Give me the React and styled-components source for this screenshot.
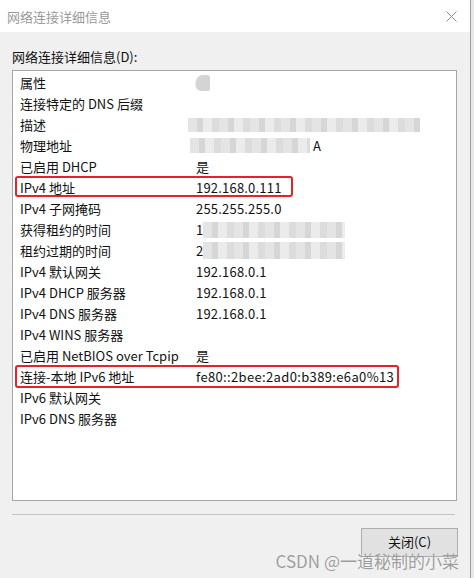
import React from "react";
import styled, { createGlobalStyle } from "styled-components";

const Global = createGlobalStyle`
  html, body { margin: 0; padding: 0; }
  body {
    width: 474px; height: 578px; overflow: hidden;
    background: #e9e9e9;
    font-family: "Noto Sans CJK SC", "Noto Sans", sans-serif;
  }
`;

const Page = styled.div`
  display: flex;
  width: 474px;
  height: 578px;
`;

const Window = styled.div`
  position: relative;
  width: 470px;
  height: 578px;
  display: flex;
  flex-direction: column;
  background: #f0f0f0;
  border-right: 1px solid #9c9c9c;
`;

const TitleBar = styled.div`
  height: 32px;
  flex: none;
  background: #ffffff;
  display: flex;
  align-items: center;
  justify-content: space-between;
  padding: 0 12px 0 7px;
`;

const Title = styled.span`
  font-size: 13px;
  color: #9a9a9a;
`;

const CloseX = styled.svg`
  width: 11px;
  height: 11px;
  margin-right: 1px;
`;

const Body = styled.div`
  flex: 1;
  display: flex;
  flex-direction: column;
  padding: 15px 13px 0 12px;
`;

const Label = styled.div`
  font-size: 13px;
  line-height: 19px;
  color: #111;
  margin-bottom: 4px;
`;

const ListBox = styled.div`
  height: 428px;
  background: #ffffff;
  border: 1px solid #a6a6a6;
  padding: 1px 0 0 7px;
  display: flex;
  flex-direction: column;
  align-items: flex-start;
`;

const Row = styled.div`
  position: relative;
  display: flex;
  height: 21px;
  align-items: center;
  font-size: 13px;
  color: #111;
  white-space: nowrap;
  ${(p) =>
    p.$marked &&
    `
    &::after {
      content: "";
      position: absolute;
      top: -1px;
      bottom: ${p.$tall ? "-1px" : "1px"};
      left: -5px;
      right: ${p.$pad}px;
      border: 2px solid #e5222a;
      border-radius: 3px;
    }
  `}
`;

const Name = styled.span`
  width: 176px;
  flex: none;
`;

const Value = styled.span`
  position: relative;
  display: flex;
  align-items: center;
  letter-spacing: ${(p) => p.$ls || 0}px;
`;

const Redact = styled.span`
  display: inline-block;
  height: ${(p) => p.$h}px;
  width: ${(p) => p.$w}px;
  margin-left: ${(p) => p.$ml || 0}px;
  background: repeating-linear-gradient(
    90deg,
    #e4e4e4 0 9px,
    #d6d6d6 9px 15px,
    #ebebeb 15px 24px,
    #dcdcdc 24px 31px
  );
`;

const Blob = styled.span`
  display: inline-block;
  width: 14px;
  height: 16px;
  border-radius: 8px 3px 2px 6px;
  background: #d4d4d4;
  margin-left: -1px;
  border-left: 1px solid #ececec;
`;

const Separator = styled.div`
  height: 1px;
  background: #c4c4c4;
  margin: 13px 2px 0 0;
`;

const Footer = styled.div`
  display: flex;
  justify-content: flex-end;
  padding-top: 13px;
  margin-right: -1px;
`;

const Button = styled.button`
  width: 97px;
  height: 29px;
  background: #e1e1e1;
  border: 1px solid #adadad;
  font-family: inherit;
  font-size: 13px;
  color: #111;
  padding: 0 0 2px;
`;

const Watermark = styled.div`
  position: absolute;
  right: 11px;
  bottom: 6px;
  font-size: 17px;
  line-height: 22px;
  color: rgba(140, 140, 140, 0.85);
  font-family: "Noto Sans CJK SC", "Liberation Sans", sans-serif;
  text-shadow: 0 0 1px rgba(255, 255, 255, 0.8);
`;

const rows = [
  { n: "属性", v: <Blob /> },
  { n: "连接特定的 DNS 后缀", v: "" },
  { n: "描述", v: <Redact $w={232} $h={14} $ml={-8} /> },
  { n: "物理地址", v: <><Redact $w={120} $h={15} $ml={-6} /><span>&nbsp;A</span></> },
  { n: "已启用 DHCP", v: "是" },
  { n: "IPv4 地址", v: "192.168.0.111", marked: true, pad: -11, ls: 0.2 },
  { n: "IPv4 子网掩码", v: "255.255.255.0", ls: 0.2 },
  { n: "获得租约的时间", v: <><span>1</span><Redact $w={142} $h={16} $ml={0} /></> },
  { n: "租约过期的时间", v: <><span>2</span><Redact $w={142} $h={17} $ml={0} /></> },
  { n: "IPv4 默认网关", v: "192.168.0.1", ls: 0.2 },
  { n: "IPv4 DHCP 服务器", v: "192.168.0.1", ls: 0.2 },
  { n: "IPv4 DNS 服务器", v: "192.168.0.1", ls: 0.2 },
  { n: "IPv4 WINS 服务器", v: "" },
  { n: "已启用 NetBIOS over Tcpip", v: "是" },
  { n: "连接-本地 IPv6 地址", v: "fe80::2bee:2ad0:b389:e6a0%13", marked: true, pad: -5, tall: true, ls: 0.35 },
  { n: "IPv6 默认网关", v: "" },
  { n: "IPv6 DNS 服务器", v: "" },
];

export default function App() {
  return (
    <Page>
      <Global />
      <Window>
        <TitleBar>
          <Title>网络连接详细信息</Title>
          <CloseX viewBox="0 0 11 11">
            <path d="M0.5 0.5 L10.5 10.5 M10.5 0.5 L0.5 10.5" stroke="#8a8a8a" strokeWidth="1" fill="none" />
          </CloseX>
        </TitleBar>
        <Body>
          <Label>网络连接详细信息(D):</Label>
          <ListBox>
            {rows.map((r) => (
              <Row key={r.n} $marked={r.marked} $pad={r.pad} $tall={r.tall}>
                <Name>{r.n}</Name>
                <Value $ls={r.ls}>{r.v}</Value>
              </Row>
            ))}
          </ListBox>
          <Separator />
          <Footer>
            <Button>关闭(C)</Button>
          </Footer>
        </Body>
        <Watermark>CSDN @一道秘制的小菜</Watermark>
      </Window>
    </Page>
  );
}
